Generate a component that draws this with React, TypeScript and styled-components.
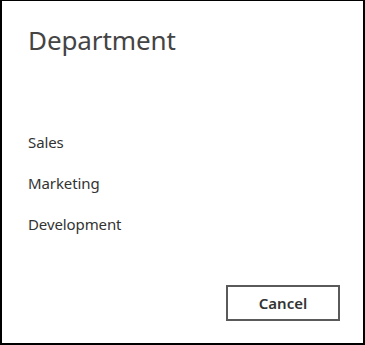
import React from "react";
import styled, { createGlobalStyle } from "styled-components";

const Global = createGlobalStyle`
  html, body { margin: 0; padding: 0; background: #fff; }
  body { font-family: "Noto Sans", "Open Sans", sans-serif; }
`;

const Dialog = styled.div`
  box-sizing: border-box;
  width: 365px;
  height: 345px;
  border: 2px solid #000;
  border-top-width: 1px;
  background: #fff;
  display: flex;
  flex-direction: column;
  padding: 21px 23px 22px 26px;
`;

const Title = styled.h1`
  margin: 0;
  font-size: 26px;
  font-weight: 400;
  color: #444;
  line-height: 36px;
  letter-spacing: -0.1px;
`;

const List = styled.ul`
  list-style: none;
  margin: 74px 0 0;
  padding: 0;
  display: flex;
  flex-direction: column;
  gap: 21px;
`;

const Item = styled.li`
  font-size: 15px;
  line-height: 20px;
  color: #333;
  letter-spacing: -0.1px;
`;

const Footer = styled.div`
  margin-top: auto;
  display: flex;
  justify-content: flex-end;
`;

const Button = styled.button`
  box-sizing: border-box;
  width: 114px;
  height: 36px;
  border: 2px solid #5a5a5a;
  background: #fff;
  font-family: inherit;
  font-size: 15px;
  font-weight: 600;
  color: #333;
  padding: 0;
`;

export default function App() {
  return (
    <>
      <Global />
      <Dialog>
        <Title>Department</Title>
        <List>
          <Item>Sales</Item>
          <Item>Marketing</Item>
          <Item>Development</Item>
        </List>
        <Footer>
          <Button>Cancel</Button>
        </Footer>
      </Dialog>
    </>
  );
}
